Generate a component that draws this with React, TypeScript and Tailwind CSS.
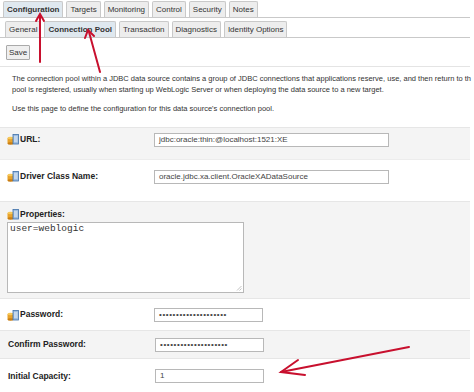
import React from 'react';

const font = { fontFamily: '"Liberation Sans", Arial, sans-serif' };

function DsIcon() {
  return (
    <svg width="12" height="12" viewBox="0 0 12 12" className="shrink-0">
      <rect x="0.5" y="5" width="6" height="5.5" fill="#e8a22a" />
      <ellipse cx="3.5" cy="10.5" rx="3" ry="1.2" fill="#c97d12" />
      <ellipse cx="3.5" cy="5" rx="3" ry="1.2" fill="#f6c85a" />
      <rect x="6" y="1.5" width="5.5" height="9.5" fill="#9dbde0" stroke="#3e6fa8" strokeWidth="0.8" />
      <line x1="7" y1="4" x2="10.5" y2="4" stroke="#fff" strokeWidth="0.8" />
      <line x1="7" y1="6" x2="10.5" y2="6" stroke="#fff" strokeWidth="0.8" />
      <line x1="7" y1="8" x2="10.5" y2="8" stroke="#fff" strokeWidth="0.8" />
    </svg>
  );
}

function Tab({ label, active }: { label: string; active?: boolean }) {
  return (
    <div
      className={
        'h-full flex items-center px-[3px] border border-b-0 border-[#c9c9c9] rounded-t-[2px] text-[8px] text-[#333] ' +
        (active ? 'bg-[#dfe8ef] font-bold' : 'bg-[#ededed]')
      }
    >
      {label}
    </div>
  );
}

function Field({ value, w }: { value: string; w: string }) {
  return (
    <div className={'h-[14px] border border-[#b8b8b8] bg-white flex items-center px-[4px] text-[8px] text-[#444] ' + w}>
      {value}
    </div>
  );
}

function Label({ text, icon }: { text: string; icon?: boolean }) {
  return (
    <div className="w-[147px] shrink-0 flex items-center gap-[1px] text-[8.5px] font-bold text-[#222]">
      {icon && <DsIcon />}
      <span>{text}</span>
    </div>
  );
}

const dots = '••••••••••••••••••••';

export default function App() {
  return (
    <div className="relative w-[474px] h-[392px] bg-white overflow-hidden" style={font}>
      {/* main tabs */}
      <div className="flex items-end gap-[3px] pl-[3px] pt-[1px] h-[18px] mr-[4px] border-b border-[#c9c9c9]">
        <Tab label="Configuration" active />
        <Tab label="Targets" />
        <Tab label="Monitoring" />
        <Tab label="Control" />
        <Tab label="Security" />
        <Tab label="Notes" />
      </div>
      {/* sub tabs */}
      <div className="flex items-end gap-[3px] pl-[5px] mt-[3px] h-[17px] mr-[4px] border-b border-[#c9c9c9]">
        <Tab label="General" />
        <Tab label="Connection Pool" active />
        <Tab label="Transaction" />
        <Tab label="Diagnostics" />
        <Tab label="Identity Options" />
      </div>

      <div className="ml-[6px] mt-[7px] w-[24px] h-[15px] border border-[#aaa] bg-[#efefef] rounded-[1px] flex items-center justify-center text-[8px] text-[#333]">
        Save
      </div>
      <div className="mt-[6px] mr-[4px] border-t border-[#e4e4e4]" />

      <div className="pl-[12px] pt-[6px] text-[7.5px] leading-[11px] text-[#333] whitespace-nowrap">
        <p>
          The connection pool within a JDBC data source contains a group of JDBC connections that applications reserve, use, and then return to th
        </p>
        <p>pool is registered, usually when starting up WebLogic Server or when deploying the data source to a new target.</p>
        <p className="mt-[8px]">Use this page to define the configuration for this data source's connection pool.</p>
      </div>

      <div className="mt-[13px] mr-[4px]">
        <div className="h-[32px] bg-[#f4f4f4] border-t border-[#e6e6e6] flex items-start pt-[5px] pl-[7px]">
          <Label text="URL:" icon />
          <Field value="jdbc:oracle:thin:@localhost:1521:XE" w="w-[235px]" />
        </div>
        <div className="h-[42px] border-t border-[#ececec] flex items-start pt-[10px] pl-[7px]">
          <Label text="Driver Class Name:" icon />
          <Field value="oracle.jdbc.xa.client.OracleXADataSource" w="w-[235px]" />
        </div>
        <div className="h-[97px] bg-[#f4f4f4] border-t border-[#e6e6e6] pl-[7px] pt-[6px]">
          <Label text="Properties:" icon />
          <div
            className="relative mt-[1px] w-[237px] h-[71px] border border-[#b8b8b8] bg-white px-[2px] text-[9.5px] leading-[12px] text-[#333]"
            style={{ fontFamily: '"Liberation Mono", monospace' }}
          >
            user=weblogic
            <svg className="absolute right-[1px] bottom-[1px]" width="6" height="6" viewBox="0 0 6 6">
              <line x1="5.5" y1="1" x2="1" y2="5.5" stroke="#aaa" strokeWidth="0.7" />
              <line x1="5.5" y1="3.5" x2="3.5" y2="5.5" stroke="#aaa" strokeWidth="0.7" />
            </svg>
          </div>
        </div>
        <div className="h-[32px] border-t border-[#e6e6e6] flex items-center pl-[7px]">
          <Label text="Password:" icon />
          <Field value={dots} w="w-[109px] tracking-[0.6px] text-[7px]" />
        </div>
        <div className="h-[28px] bg-[#f4f4f4] border-t border-[#e6e6e6] flex items-center pl-[8px]">
          <Label text="Confirm Password:" />
          <Field value={dots} w="w-[109px] tracking-[0.6px] text-[7px]" />
        </div>
        <div className="h-[35px] border-t border-[#e6e6e6] flex items-center pl-[8px]">
          <Label text="Initial Capacity:" />
          <Field value="1" w="w-[109px]" />
        </div>
      </div>

      {/* red annotation arrows */}
      <svg className="absolute left-0 top-0 pointer-events-none" width="474" height="392" viewBox="0 0 474 392">
        <g stroke="#c8102e" strokeWidth="2" fill="none" strokeLinecap="round">
          <line x1="40" y1="62" x2="40" y2="15" />
          <polyline points="36,21 40,14 44,21" />
          <line x1="100" y1="72" x2="89" y2="32" />
          <polyline points="85,38 88,30 94,36" />
          <line x1="409" y1="347" x2="281" y2="372" />
          <polyline points="298,360 281,372 305,375" />
        </g>
      </svg>
    </div>
  );
}
